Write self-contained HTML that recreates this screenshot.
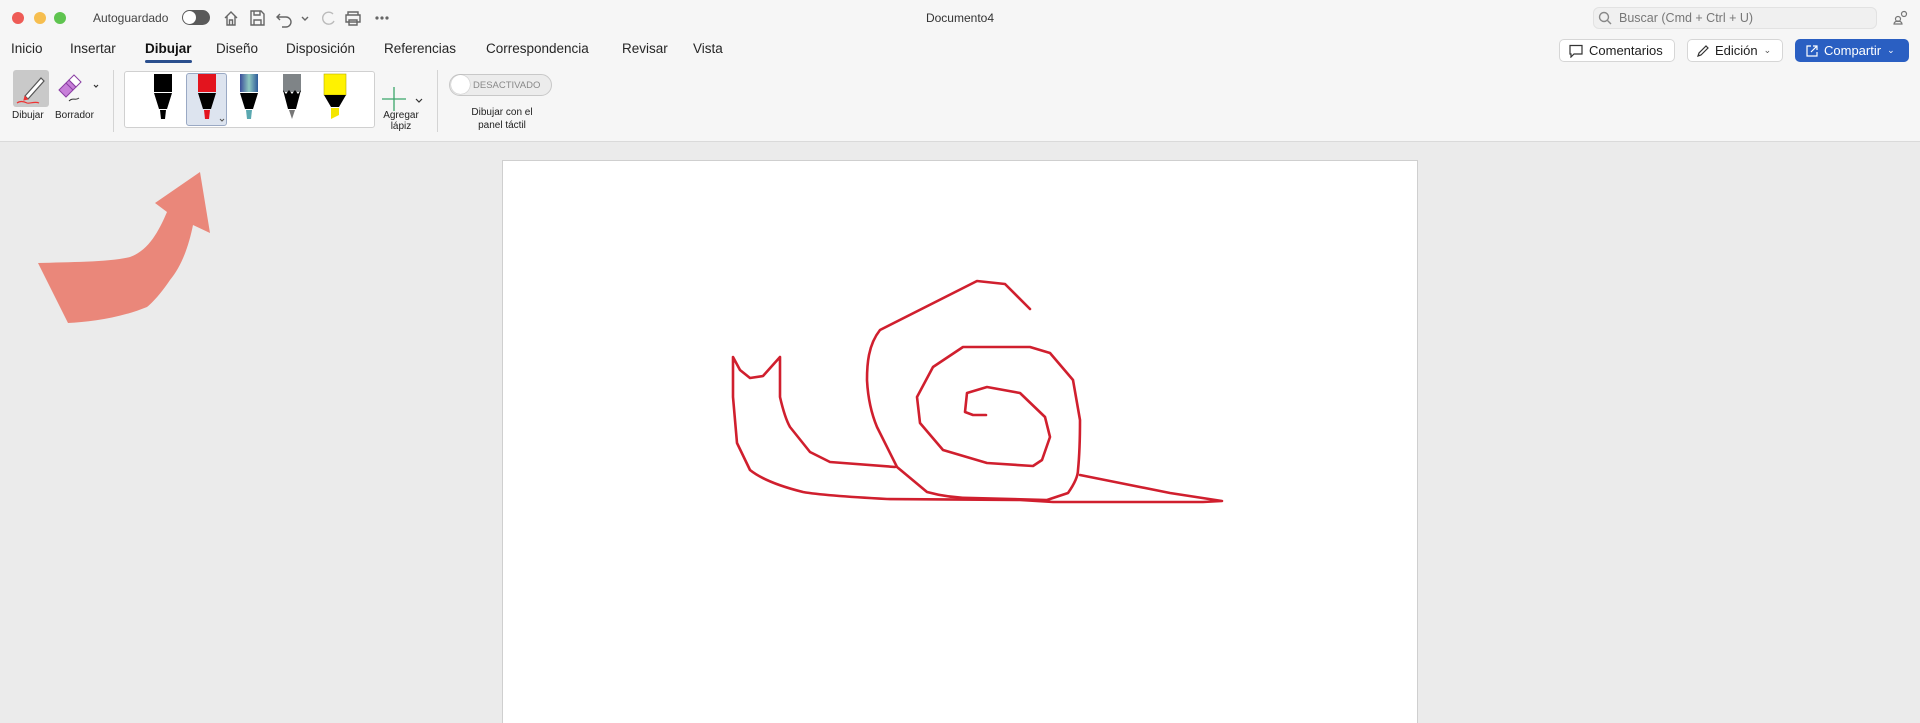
<!DOCTYPE html>
<html style="overflow:hidden;height:723px"><head><meta charset="utf-8"><style>
body{margin:0;width:1920px;height:723px;overflow:hidden;background:#ebebeb;font-family:"Liberation Sans",sans-serif;position:relative;color:#1e1e1e}
.a{position:absolute;white-space:nowrap}
.tab{position:absolute;top:41px;font-size:13.5px;color:#262626}
.sm{font-size:10px;color:#222;text-align:center}
.btn{position:absolute;top:39px;height:23px;border:1px solid #d6d6d6;border-radius:5px;background:#fff;font-size:13px;display:flex;align-items:center;box-sizing:border-box}
</style></head><body>
<div class="a" style="left:0;top:0;width:1920px;height:141px;background:#f6f6f6;border-bottom:1px solid #dadada"></div>
<div class="a" style="left:12px;top:12px;width:12px;height:12px;border-radius:50%;background:#ee5b56"></div>
<div class="a" style="left:34px;top:12px;width:12px;height:12px;border-radius:50%;background:#f6be4f"></div>
<div class="a" style="left:54px;top:12px;width:12px;height:12px;border-radius:50%;background:#5fc450"></div>
<div class="a" style="left:93px;top:11px;font-size:12px;color:#444">Autoguardado</div>
<div class="a" style="left:182px;top:10px;width:28px;height:15px;border-radius:8px;background:#5a5a5a"></div>
<div class="a" style="left:183px;top:11px;width:13px;height:13px;border-radius:50%;background:#fff"></div>
<svg class="a" style="left:220px;top:6px" width="180" height="24" fill="none" stroke="#666" stroke-width="1.4">
<path d="M5 12 L11 6 L17 12 M7 10 V19 H15 V10 M9.5 19 V14 H12.5 V19"/>
<path d="M31 5 H41 L44 8 V19 H31 Z M34 5 V9 H40 V5 M34 19 V14 H41 V19"/>
<path d="M60 8 L57 11 L60 14 M57 11 H66 A5 5 0 0 1 66 21 H62"/>
<path d="M82 11 L85 14 L88 11"/>
<path d="M113 8 A6 6 0 1 0 114 15" stroke="#bbb"/>
<path d="M128 9 V6 H138 V9 M126 9 H140 V16 H126 Z M129 14 H137 V19 H129 Z"/>
<circle cx="157" cy="12" r="0.9" fill="#666"/><circle cx="162" cy="12" r="0.9" fill="#666"/><circle cx="167" cy="12" r="0.9" fill="#666"/>
</svg>
<div class="a" style="left:0;width:1920px;top:11px;text-align:center;font-size:12px;color:#333">Documento4</div>
<div class="a" style="left:1593px;top:7px;width:284px;height:22px;border-radius:6px;background:#f0f0f0;border:1px solid #e2e2e2;box-sizing:border-box"></div>
<svg class="a" style="left:1598px;top:11px" width="14" height="14" fill="none" stroke="#888" stroke-width="1.4"><circle cx="6" cy="6" r="4.5"/><path d="M9.5 9.5 L13 13"/></svg>
<div class="a" style="left:1619px;top:11px;font-size:12.5px;color:#777">Buscar (Cmd + Ctrl + U)</div>
<svg class="a" style="left:1892px;top:9px" width="18" height="16" fill="none" stroke="#777" stroke-width="1.2"><circle cx="6" cy="10" r="2.5"/><circle cx="12" cy="5" r="2.5"/><path d="M2 15 A4 3 0 0 1 10 15 Z"/></svg>
<div class="tab" style="left:11px">Inicio</div>
<div class="tab" style="left:70px">Insertar</div>
<div class="tab" style="left:145px;font-weight:bold;color:#111">Dibujar</div>
<div class="a" style="left:145px;top:60px;width:47px;height:3px;background:#2b4f8e;border-radius:2px"></div>
<div class="tab" style="left:216px">Diseño</div>
<div class="tab" style="left:286px">Disposición</div>
<div class="tab" style="left:384px">Referencias</div>
<div class="tab" style="left:486px">Correspondencia</div>
<div class="tab" style="left:622px">Revisar</div>
<div class="tab" style="left:693px">Vista</div>
<div class="btn" style="left:1559px;width:116px;padding-left:8px"><svg width="16" height="14" fill="none" stroke="#333" stroke-width="1.2"><path d="M2 1.5 H14 V10 H6 L3 13 V10 H2 Z"/></svg><span style="margin-left:5px">Comentarios</span></div>
<div class="btn" style="left:1687px;width:96px;padding-left:8px"><svg width="14" height="14" fill="none" stroke="#333" stroke-width="1.2"><path d="M2 12 L3 9 L10 2 L12 4 L5 11 Z"/></svg><span style="margin-left:5px">Edición</span><span style="margin-left:6px;font-size:9px;color:#555">⌄</span></div>
<div class="btn" style="left:1795px;width:114px;padding-left:9px;background:#2a5fc2;border-color:#2a5fc2;color:#fff"><svg width="14" height="14" fill="none" stroke="#fff" stroke-width="1.2"><path d="M6 2 H2 V12 H12 V8 M8 2 H12 V6 M12 2 L6 8"/></svg><span style="margin-left:5px">Compartir</span><span style="margin-left:6px;font-size:9px">⌄</span></div>
<div class="a" style="left:13px;top:70px;width:36px;height:37px;background:#c9c9c9;border-radius:3px"></div>
<svg class="a" style="left:13px;top:70px" width="90" height="40" fill="none">
<path d="M12 26 L28 8 L31 11 L15 29 Z" fill="#fff" stroke="#555" stroke-width="1.2"/>
<path d="M12 26 L11 30 L15 29" fill="#e33" stroke="#e33"/>
<path d="M4 33 C8 30 12 32 14 33 S22 31 26 33" stroke="#e33" stroke-width="1.2"/>
<path d="M46 20 L56 10 L63 17 L53 27 Z" fill="#c77fd9" stroke="#8a3fa3" stroke-width="1"/>
<path d="M53 13 L60 20" stroke="#8a3fa3"/>
<path d="M56 10 L63 17 L68 12 L61 5 Z" fill="#fff" stroke="#8a3fa3" stroke-width="1"/>
<path d="M56 31 C60 27 62 31 66 28" stroke="#333"/>
<path d="M81 15 L83 17 L85 15" stroke="#333" stroke-width="1.2"/>
</svg>
<div class="a sm" style="left:12px;top:110px">Dibujar</div>
<div class="a sm" style="left:55px;top:110px">Borrador</div>
<div class="a" style="left:113px;top:70px;width:1px;height:62px;background:#d4d4d4"></div>
<div class="a" style="left:124px;top:71px;width:251px;height:57px;background:#fff;border:1px solid #d0d0d0;border-radius:3px;box-sizing:border-box"></div>
<div class="a" style="left:186px;top:73px;width:41px;height:53px;background:#dde4ef;border:1px solid #9aa9c4;border-radius:3px;box-sizing:border-box"></div>
<svg class="a" style="left:124px;top:71px" width="320" height="60">
<defs><linearGradient id="g" x1="0" x2="1"><stop offset="0" stop-color="#3a4e9a"/><stop offset=".5" stop-color="#8fc9c0"/><stop offset="1" stop-color="#2e5c9a"/></linearGradient></defs>
<g transform="translate(39,0)"><rect x="-9" y="3" width="18" height="18" fill="#000"/><path d="M-9 22 H9 L4 38 H-4 Z" fill="#000"/><path d="M-3 39 H3 L2 48 H-2 Z" fill="#000"/></g>
<g transform="translate(83,0)"><rect x="-9" y="3" width="18" height="18" fill="#e3141e"/><path d="M-9 22 H9 L4 38 H-4 Z" fill="#000"/><path d="M-3 39 H3 L2 48 H-2 Z" fill="#e3141e"/><path d="M13 48 L15 50 L17 48" stroke="#555" fill="none"/></g>
<g transform="translate(125,0)"><rect x="-9" y="3" width="18" height="18" fill="url(#g)"/><path d="M-9 22 H9 L4 38 H-4 Z" fill="#000"/><path d="M-3 39 H3 L2 48 H-2 Z" fill="#5aa8b0"/></g>
<g transform="translate(168,0)"><rect x="-9" y="3" width="18" height="18" fill="#7f8487"/><path d="M-9 19 L-6 23 L-3 19 L0 23 L3 19 L6 23 L9 19 L4 38 H-4 Z" fill="#000"/><path d="M-3 39 H3 L0 48 Z" fill="#777"/></g>
<g transform="translate(211,0)"><rect x="-11" y="3" width="22" height="21" fill="#fff200" stroke="#b8ae00" stroke-width=".6"/><path d="M-11 24 H11 L4 36 H-4 Z" fill="#000"/><path d="M-4 37 H4 V44 L-4 48 Z" fill="#f4e600"/></g>
<path d="M258 28 H282 M270 16 V40" stroke="#3aa66a" stroke-width="1.3"/>
<path d="M292 28 L295 31 L298 28" stroke="#333" stroke-width="1.2" fill="none"/>
</svg>
<div class="a sm" style="left:380px;top:110px;width:42px">Agregar<br>lápiz</div>
<div class="a" style="left:437px;top:70px;width:1px;height:62px;background:#d4d4d4"></div>
<div class="a" style="left:449px;top:74px;width:103px;height:22px;border:1px solid #c8c8c8;border-radius:11px;background:#ececec;box-sizing:border-box"></div>
<div class="a" style="left:451px;top:75px;width:19px;height:19px;border-radius:50%;background:#fff;box-shadow:0 0 1px #888"></div>
<div class="a" style="left:473px;top:80px;font-size:9.5px;color:#888">DESACTIVADO</div>
<div class="a sm" style="left:450px;top:106px;width:104px;line-height:13px">Dibujar con el<br>panel táctil</div>
<div class="a" style="left:502px;top:160px;width:916px;height:563px;background:#fff;border:1px solid #cfcfcf;border-bottom:none;box-sizing:border-box"></div>
<svg class="a" style="left:0;top:0" width="1920" height="723">
<path d="M38 263 C70 262 110 262 130 257 C150 250 160 228 167 212 L155 203 L200 172 L210 233 L193 225 C188 250 180 268 170 280 C160 295 150 305 147 307 C120 318 90 322 68 323 Z" fill="#ea877a"/>
<g fill="none" stroke="#d01f2e" stroke-width="2.6" stroke-linecap="round" stroke-linejoin="round">
<path d="M1030 309 L1005 284 L977 281 L880 330 C868 345 867 365 867 380 C868 400 872 415 877 427 L897 467 L927 492 C945 497 960 498 973 498 L1047 500 L1068 493 C1075 483 1078 475 1078 470 C1080 450 1080 430 1080 420 L1073 380 L1050 353 L1030 347 L963 347 L933 367 L917 397 L920 423 L943 450 L987 463 L1033 466 L1042 460 L1050 437 L1045 417 L1020 393 L987 387 L967 393 L965 412 L973 415 L986 415"/>
<path d="M1080 475 L1120 483 L1170 493 L1222 501 L1203 502 L1053 502 L1020 500 L887 499 C850 497 820 495 803 492 C775 485 760 478 750 470 L737 443 L733 397 L733 357 L740 370 L750 378 L763 376 L780 357 L780 397 C783 410 786 420 790 427 L810 452 L830 462 L895 467"/>
</g>
</svg>
</body></html>
